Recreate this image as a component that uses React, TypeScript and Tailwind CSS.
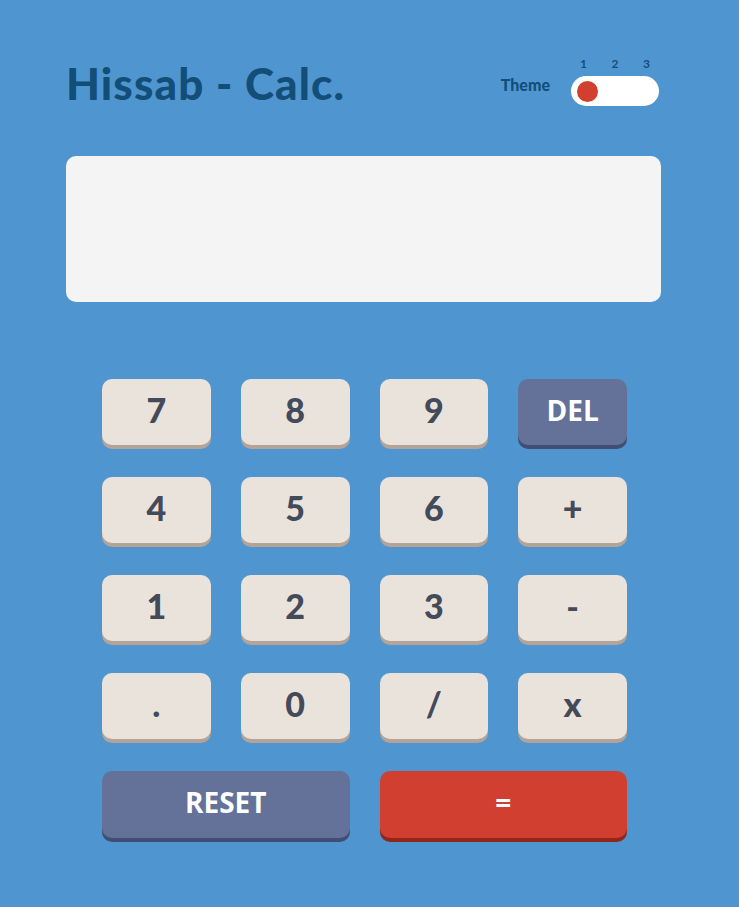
const keys: { label: string; kind: "num" | "del" }[] = [
  { label: "7", kind: "num" },
  { label: "8", kind: "num" },
  { label: "9", kind: "num" },
  { label: "DEL", kind: "del" },
  { label: "4", kind: "num" },
  { label: "5", kind: "num" },
  { label: "6", kind: "num" },
  { label: "+", kind: "num" },
  { label: "1", kind: "num" },
  { label: "2", kind: "num" },
  { label: "3", kind: "num" },
  { label: "-", kind: "num" },
  { label: ".", kind: "num" },
  { label: "0", kind: "num" },
  { label: "/", kind: "num" },
  { label: "x", kind: "num" },
];

function Key({ label, kind }: { label: string; kind: "num" | "del" }) {
  if (kind === "del") {
    return (
      <button className="h-[66px] pb-[5px] rounded-[10px] bg-[#647198] shadow-[0_4px_0_#414e73] text-white text-[28px] font-bold font-['Open_Sans',sans-serif]">
        {label}
      </button>
    );
  }
  return (
    <button className="h-[66px] pb-[5px] rounded-[10px] bg-[#eae3dc] shadow-[0_4px_0_#b3a497] text-[#434a59] text-[34px] font-black font-['Lato',sans-serif]">
      {label}
    </button>
  );
}

export default function App() {
  return (
    <div className="min-h-screen w-full bg-[#4f96d0] font-['Lato',sans-serif]">
      <div className="w-[595px] ml-[66px] pt-[58px]">
        <header className="flex items-center justify-between">
          <h1 className="text-[44px] font-black text-[#134e78] leading-none tracking-[0.025em] mt-[2px]">
            Hissab - Calc.
          </h1>
          <div className="flex items-end gap-[21px] mr-[2px]">
            <span className="text-[16px] font-black text-[#134e78] mb-[9px]">Theme</span>
            <div className="flex flex-col">
              <div className="flex justify-between px-[9px] text-[12px] font-bold text-[#134e78] leading-none mb-[6px]">
                <span>1</span>
                <span>2</span>
                <span>3</span>
              </div>
              <div className="w-[88px] h-[30px] rounded-full bg-white flex items-center px-[6px]">
                <span className="w-[21px] h-[21px] rounded-full bg-[#d03f2f]" />
              </div>
            </div>
          </div>
        </header>

        <div className="mt-[50px] h-[146px] rounded-[10px] bg-[#f4f4f4]" />

        <div className="mt-[77px] ml-[36px] mr-[34px] grid grid-cols-4 gap-x-[30px] gap-y-[32px]">
          {keys.map((k) => (
            <Key key={k.label} label={k.label} kind={k.kind} />
          ))}
          <button className="col-span-2 h-[67px] pb-[5px] rounded-[10px] bg-[#647198] shadow-[0_4px_0_#414e73] text-white text-[28px] font-bold font-['Open_Sans',sans-serif]">
            RESET
          </button>
          <button className="col-span-2 h-[67px] pb-[5px] rounded-[10px] bg-[#d03f2f] shadow-[0_4px_0_#93261a] text-white text-[28px] font-bold font-['Open_Sans',sans-serif]">
            =
          </button>
        </div>
      </div>
    </div>
  );
}
